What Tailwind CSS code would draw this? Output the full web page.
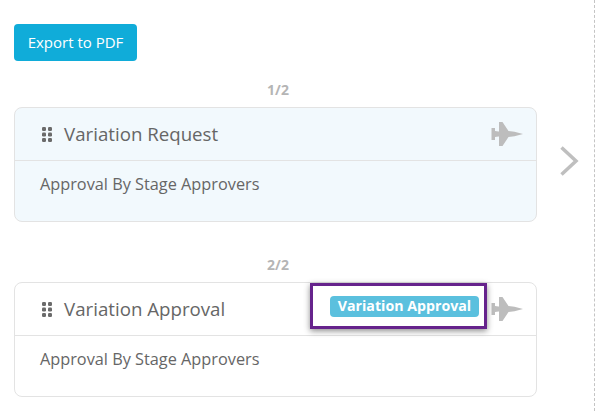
<!DOCTYPE html>
<html lang="en">
<head>
    <meta charset="UTF-8">
    <meta name="viewport" content="width=device-width, initial-scale=1.0">
    <title>Workflow Stages</title>
    <script src="https://cdn.jsdelivr.net/npm/@tailwindcss/browser@4"></script>
</head>
<body class="bg-white font-['Open_Sans',sans-serif] overflow-hidden">
    <div class="relative w-[605px] h-[411px] overflow-hidden">
        <!-- dashed divider on the right -->
        <div class="absolute left-[594px] top-0 h-full border-l border-dashed border-[#c4c4c4]"></div>

        <div class="w-[523px] ml-[14px] pt-[24px]">
            <button class="block w-[123px] h-[37px] bg-[#10acd9] text-white text-[15px] rounded-[4px]">Export to PDF</button>

            <!-- stage 1 -->
            <div class="mt-[19px] h-[19px] pl-[5px] text-center text-[14px] leading-[19px] font-bold text-[#b5b5b5]">1/2</div>
            <div class="mt-[8px] h-[115px] bg-[#f2f9fd] border border-[#e3e3e3] rounded-[8px]">
                <div class="flex items-center h-[53px] border-b border-[#e3e3e3] pl-[26px] pr-[13px]">
                    <svg width="12" height="16" viewBox="0 0 12 16" class="fill-[#6b6b6b] shrink-0">
                        <rect x="1" y="1" width="4" height="4" rx="1.2"/><rect x="7" y="1" width="4" height="4" rx="1.2"/>
                        <rect x="1" y="6.5" width="4" height="4" rx="1.2"/><rect x="7" y="6.5" width="4" height="4" rx="1.2"/>
                        <rect x="1" y="12" width="4" height="4" rx="1.2"/><rect x="7" y="12" width="4" height="4" rx="1.2"/>
                    </svg>
                    <span class="ml-[11px] text-[18.7px] text-[#666666]">Variation Request</span>
                    <svg width="33" height="25" viewBox="0 0 33 25" class="ml-auto fill-[#bdbdbd] shrink-0">
                        <path d="M1.500 6h3.500v3l3.500 .5H9V0h3.500l6 9 6 .8 8.500 2.200-8.500 2.200-6 .8-6 9H9v-9.500h-.5L5 15v3H1.500z"/>
                    </svg>
                </div>
                <div class="pl-[25px] pt-[11px] text-[16.300px] text-[#666666]">Approval By Stage Approvers</div>
            </div>

            <!-- stage 2 -->
            <div class="mt-[33px] h-[19px] pl-[5px] text-center text-[14px] leading-[19px] font-bold text-[#b5b5b5]">2/2</div>
            <div class="mt-[8px] h-[115px] bg-white border border-[#e3e3e3] rounded-[8px]">
                <div class="relative flex items-center h-[53px] border-b border-[#e3e3e3] pl-[26px] pr-[13px]">
                    <svg width="12" height="16" viewBox="0 0 12 16" class="fill-[#6b6b6b] shrink-0">
                        <rect x="1" y="1" width="4" height="4" rx="1.2"/><rect x="7" y="1" width="4" height="4" rx="1.2"/>
                        <rect x="1" y="6.5" width="4" height="4" rx="1.2"/><rect x="7" y="6.5" width="4" height="4" rx="1.2"/>
                        <rect x="1" y="12" width="4" height="4" rx="1.2"/><rect x="7" y="12" width="4" height="4" rx="1.2"/>
                    </svg>
                    <span class="ml-[11px] text-[18.7px] text-[#666666]">Variation Approval</span>
                    <svg width="33" height="25" viewBox="0 0 33 25" class="ml-auto fill-[#bdbdbd] shrink-0">
                        <path d="M1.500 6h3.500v3l3.500 .5H9V0h3.500l6 9 6 .8 8.500 2.200-8.500 2.200-6 .8-6 9H9v-9.500h-.5L5 15v3H1.500z"/>
                    </svg>
                    <!-- highlight box over the badge -->
                    <div class="absolute left-[295px] top-0 w-[177px] h-[46px] border-[3px] border-[#66238c] shadow-[0_2px_6px_rgba(0,0,0,0.45)] flex items-center">
                        <span class="ml-[17px] w-[149px] h-[21px] bg-[#5bc0de] rounded-[4px] text-white text-[14.2px] leading-[20px] font-bold text-center whitespace-nowrap">Variation Approval</span>
                    </div>
                </div>
                <div class="pl-[25px] pt-[11px] text-[16.300px] text-[#666666]">Approval By Stage Approvers</div>
            </div>
        </div>

        <!-- next arrow -->
        <svg width="20" height="32" viewBox="0 0 20 32" class="absolute left-[559px] top-[145px] fill-none stroke-[#bfbfbf] stroke-[3.5px]">
            <path d="M2.500 2.500l14.500 13.500-14.500 13.500"/>
        </svg>
    </div>
</body>
</html>
